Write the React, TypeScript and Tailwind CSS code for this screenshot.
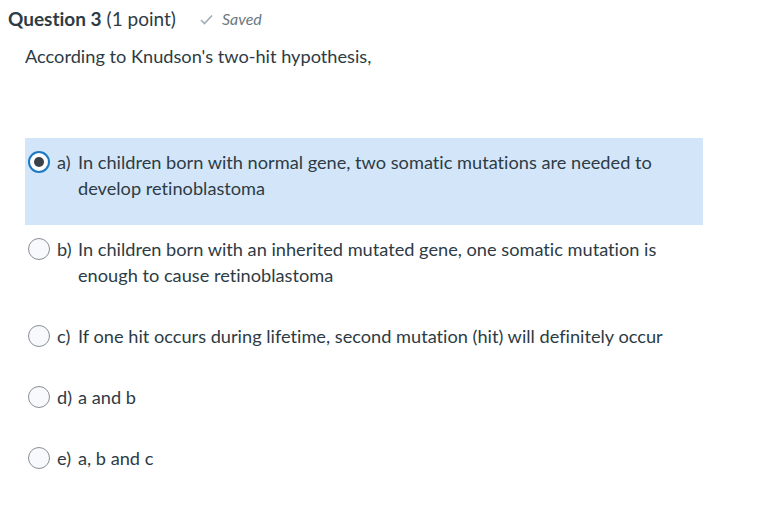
const options = [
  { key: "a)", text: "In children born with normal gene, two somatic mutations are needed to develop retinoblastoma", selected: true },
  { key: "b)", text: "In children born with an inherited mutated gene, one somatic mutation is enough to cause retinoblastoma", selected: false },
  { key: "c)", text: "If one hit occurs during lifetime, second mutation (hit) will definitely occur", selected: false },
  { key: "d)", text: "a and b", selected: false },
  { key: "e)", text: "a, b and c", selected: false },
];

function Radio({ checked }: { checked: boolean }) {
  if (checked) {
    return (
      <span className="flex h-[22px] w-[22px] shrink-0 items-center justify-center rounded-full border-2 border-[#1a79c4] bg-white">
        <span className="block h-[10px] w-[10px] rounded-full bg-[#3a4148]" />
      </span>
    );
  }
  return <span className="block h-[22px] w-[22px] shrink-0 rounded-full border border-[#8a8f95] bg-[#f7f9fc]" />;
}

export default function App() {
  return (
    <div
      className="min-h-[512px] bg-white pl-2 pt-[8px] text-[#2d3b45]"
      style={{ fontFamily: "Lato, 'Open Sans', sans-serif", fontVariantLigatures: "none" }}
    >
      <div className="flex items-center leading-[22px]">
        <span className="text-[19px] font-bold">Question 3</span>
        <span className="ml-[5px] text-[19px]">(1 point)</span>
        <span className="ml-[24px] flex items-center gap-[9px] text-[16px] italic text-[#6b7780]">
          <svg width="13" height="11" viewBox="0 0 13 11" fill="none">
            <path d="M1 6 L4.5 9.5 L12 1.5" stroke="#a3acb3" strokeWidth="1.6" />
          </svg>
          Saved
        </span>
      </div>

      <p className="ml-[17px] mt-[13px] text-[18.2px] leading-[26px]">According to Knudson's two-hit hypothesis,</p>

      <div className="ml-[17px] mt-[69px] w-[678px]">
        {options.map((o) => (
          <div
            key={o.key}
            className={"flex pb-[24px] pt-[11px] text-[18.2px] leading-[26px] " + (o.selected ? "bg-[#d3e6f9]" : "")}
          >
            <div className="ml-[3px] mt-[2px]">
              <Radio checked={o.selected} />
            </div>
            <span className="ml-[7px] w-[21px] shrink-0">{o.key}</span>
            <span className="pr-[20px]">{o.text}</span>
          </div>
        ))}
      </div>
    </div>
  );
}
